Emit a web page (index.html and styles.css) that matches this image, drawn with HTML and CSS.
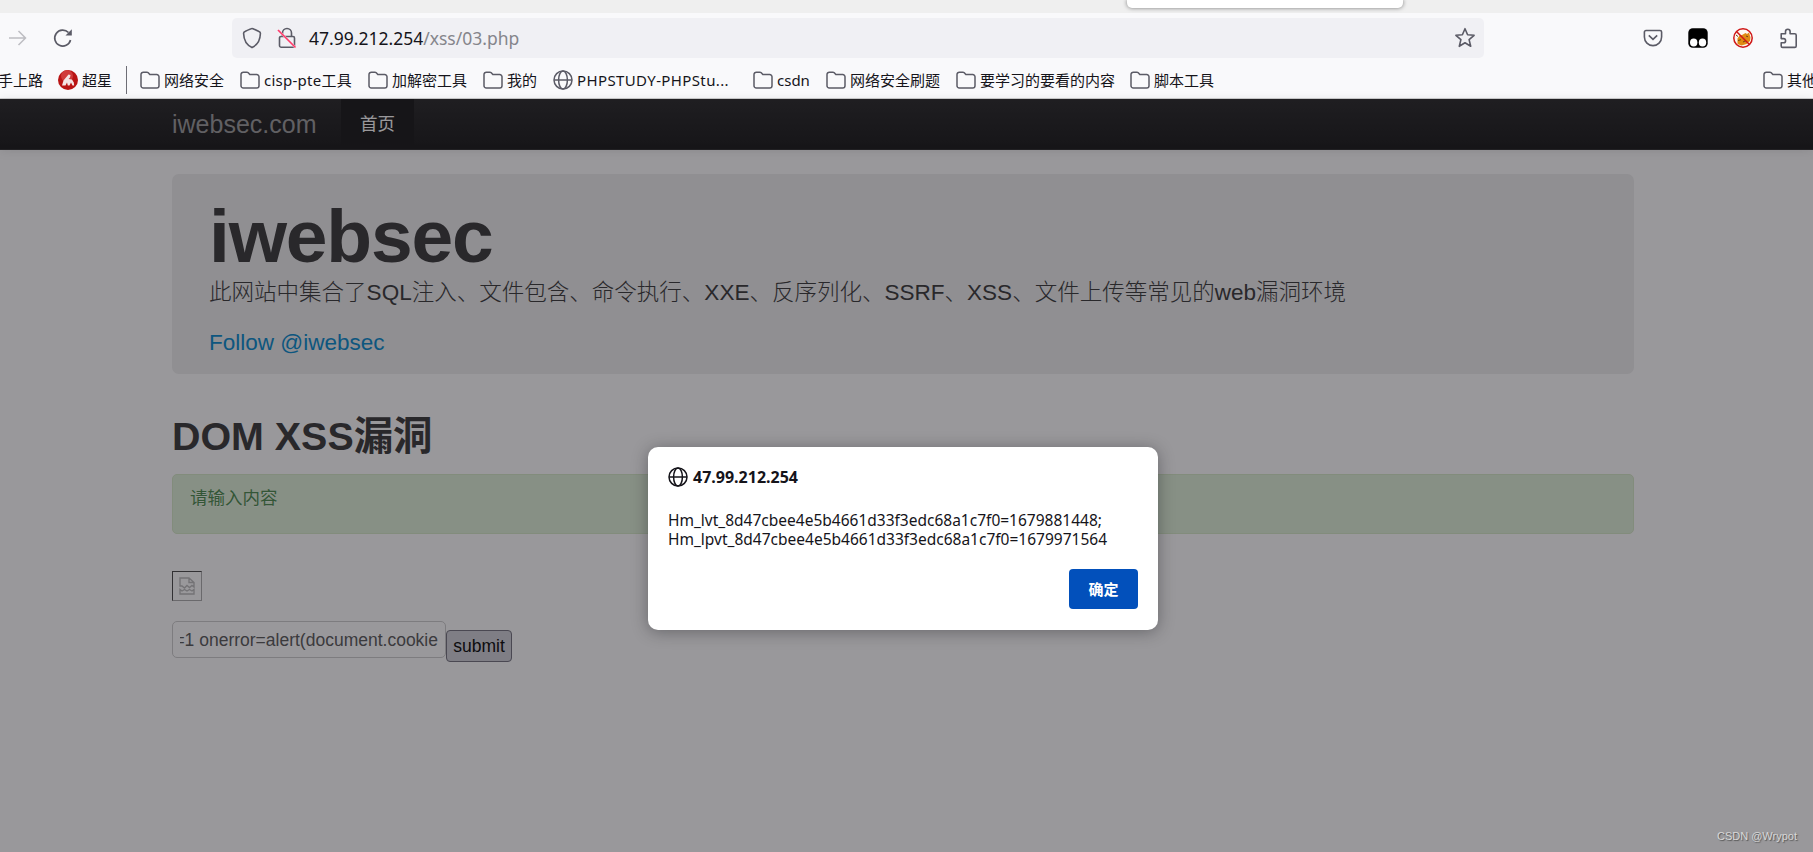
FILE: index.html
```html
<!DOCTYPE html>
<html lang="zh-CN">
<head>
    <meta charset="UTF-8">
    <title>DOM XSS漏洞</title>
    <link rel="stylesheet" href="styles.css">
</head>
<body>
    <!-- shared icons -->
    <svg class="defs" width="0" height="0">
        <symbol id="folder" viewBox="0 0 20 18">
            <path d="M1 3.5a2.3 2.3 0 0 1 2.3-2.3h3.6q.8 0 1.4.6l1.5 1.7h6.9A2.3 2.3 0 0 1 19 5.800v8.900A2.300 2.300 0 0 1 16.700 17H3.300A2.300 2.300 0 0 1 1 14.700z" fill="none" stroke="currentColor" stroke-width="1.5"/>
        </symbol>
        <symbol id="globe" viewBox="0 0 20 20">
            <g fill="none" stroke="currentColor" stroke-width="1.5">
                <circle cx="10" cy="10" r="9"/>
                <ellipse cx="10" cy="10" rx="4.4" ry="9"/>
                <path d="M1 10h18"/>
            </g>
        </symbol>
    </svg>

    <div class="tabstrip"><div class="tab-popup"></div></div>

    <div class="toolbar">
        <div class="nav-buttons">
            <svg class="forward" width="20" height="20" viewBox="0 0 20 20"><path d="M1 10h16.500M10.500 3l7 7-7 7" fill="none" stroke="currentColor" stroke-width="1.5"/></svg>
            <svg width="20" height="20" viewBox="0 0 20 20"><path d="M17.500 12A8 8 0 1 1 15.500 4.500" fill="none" stroke="currentColor" stroke-width="1.700"/><path d="M18.800 1.200v6.300h-6.300z" fill="currentColor"/></svg>
        </div>
        <div class="urlbar">
            <svg width="20" height="22" viewBox="0 0 20 22"><path d="M10 1.500Q10.700 1.500 17 4.400Q18.500 5 18.400 6.500C18.200 13 15.500 18 10 20.500C4.500 18 1.800 13 1.600 6.500Q1.500 5 3 4.400Q9.300 1.500 10 1.500z" fill="none" stroke="currentColor" stroke-width="1.6"/></svg>
            <svg class="lock" width="20" height="22" viewBox="0 0 20 22"><path d="M5.500 9.500V6a4.500 4.500 0 0 1 9 0v3.500M4 9.500h12a1.500 1.500 0 0 1 1.500 1.500v7.500a1.800 1.800 0 0 1-1.800 1.800H4.300a1.800 1.800 0 0 1-1.800-1.800V11A1.500 1.500 0 0 1 4 9.500z" fill="none" stroke="currentColor" stroke-width="1.6"/><path d="M2 4l17 17" stroke="#f0f0f4" stroke-width="2"/><path d="M1 3l17.500 17.500" stroke="#ff3b6b" stroke-width="1.700"/></svg>
            <span class="url"><span class="host">47.99.212.254</span>/xss/03.php</span>
            <svg class="star" width="22" height="22" viewBox="0 0 22 22"><path d="M11 1.700l2.600 6.100 6.500.5-5 4.300 1.600 6.700-5.700-3.500-5.700 3.500 1.600-6.700-5-4.300 6.500-.5z" fill="none" stroke="currentColor" stroke-width="1.600" stroke-linejoin="round"/></svg>
        </div>
        <div class="extensions">
            <svg width="20" height="20" viewBox="0 0 20 20"><path d="M3 2.500h14a1.600 1.600 0 0 1 1.600 1.600V9a8.600 8.600 0 0 1-17.200 0V4.100A1.600 1.600 0 0 1 3 2.500zM5.800 7.300L10 11.300l4.200-4" fill="none" stroke="currentColor" stroke-width="1.600"/></svg>
            <svg width="20" height="20" viewBox="0 0 20 20"><rect x=".3" y=".3" width="19.400" height="19.400" rx="4.500"/><ellipse cx="5.700" cy="14.600" rx="3.700" ry="4" fill="#fff"/><ellipse cx="14.500" cy="14.600" rx="3.700" ry="4" fill="#fff"/></svg>
            <svg width="20" height="20" viewBox="0 0 20 20"><circle cx="10" cy="10" r="9.200" fill="#fdf8f0"/><path d="M4.500 10.500L6.500 7.500 9 7l3.500-2 1.500 1L16 4.500l1.500 5-.5 3.500-3.500 3-5 1.500-4-1.500z" fill="#e08a12"/><path d="M5 12.500l3-.8M10 14l3-1.500M13 8l2 .8M3 7l2 1.500" stroke="#704414" stroke-width="1"/><circle cx="10" cy="10" r="9.200" fill="none" stroke="#cf1717" stroke-width="1.500"/><path d="M3.500 3.500l13 13" stroke="#cf1717" stroke-width="1.500"/></svg>
            <svg class="puzzle" width="20" height="22" viewBox="0 0 20 22"><path d="M2.200 6.800h4.300V4.500a2.300 2.300 0 0 1 4.600 0v2.300h4.700a1.400 1.400 0 0 1 1.400 1.400V19a1.400 1.400 0 0 1-1.400 1.400H3.600A1.400 1.400 0 0 1 2.200 19v-3.200h2.300a2.100 2.100 0 0 0 0-4.200H2.200z" fill="none" stroke="currentColor" stroke-width="1.600" stroke-linejoin="round"/></svg>
        </div>
    </div>

    <div class="bookmarks">
        <span class="bookmark cut">手上路</span>
        <span class="bookmark"><svg width="20" height="20" viewBox="0 0 20 20"><circle cx="10" cy="10" r="10" fill="#b91414"/><circle cx="9" cy="6" r="6" fill="#d03a3a"/><path d="M4 15.500l1.500-5 2.500-3 2.500-3 2 .5-.5 2.500-1.500 1.500 3.500.5 1.800 3 .4 3h-1.700l-1.500-3-1.500 3H9.800l-.8-3-1.500 3z" fill="#f4e4e4"/></svg>超星</span>
        <span class="separator"></span>
        <span class="bookmark"><svg><use href="#folder"/></svg>网络安全</span>
        <span class="bookmark cisp"><svg><use href="#folder"/></svg>cisp-pte工具</span>
        <span class="bookmark"><svg><use href="#folder"/></svg>加解密工具</span>
        <span class="bookmark"><svg><use href="#folder"/></svg>我的</span>
        <span class="bookmark site"><svg><use href="#globe"/></svg>PHPSTUDY-PHPStu...</span>
        <span class="bookmark"><svg><use href="#folder"/></svg>csdn</span>
        <span class="bookmark"><svg><use href="#folder"/></svg>网络安全刷题</span>
        <span class="bookmark"><svg><use href="#folder"/></svg>要学习的要看的内容</span>
        <span class="bookmark"><svg><use href="#folder"/></svg>脚本工具</span>
        <span class="bookmark"><svg><use href="#folder"/></svg>其他</span>
    </div>

    <div class="page">
        <div class="navbar">
            <a class="brand">iwebsec.com</a>
            <a class="active">首页</a>
        </div>
        <div class="container">
            <div class="hero-unit">
                <h1>iwebsec</h1>
                <p>此网站中集合了SQL注入、文件包含、命令执行、XXE、反序列化、SSRF、XSS、文件上传等常见的web漏洞环境</p>
                <p class="follow"><a>Follow @iwebsec</a></p>
            </div>
            <h2>DOM XSS漏洞</h2>
            <div class="alert">请输入内容</div>
            <div class="broken-img">
                <svg width="16" height="18" viewBox="0 0 16 18"><path d="M1 9V1h9l5 4.500V10l-2-1.500-2.500 2L8 8.500l-2.500 2.500L3 9zM10 1v4.500h5M1 17v-4.500l2 1.500 2.500-1.500L8 14l2.500-1.500L13 14l2-1.500V17z" fill="none" stroke="currentColor" stroke-width="1.400"/></svg>
            </div>
            <form class="search">
                <div class="text-input"><span>=1 onerror=alert(document.cookie</span></div>
                <button type="button" class="submit">submit</button>
            </form>
        </div>

        <div class="overlay">
            <div class="dialog">
                <div class="dialog-title"><svg><use href="#globe"/></svg>47.99.212.254</div>
                <div class="dialog-text">Hm_lvt_8d47cbee4e5b4661d33f3edc68a1c7f0=1679881448;<br>Hm_lpvt_8d47cbee4e5b4661d33f3edc68a1c7f0=1679971564</div>
                <button type="button" class="ok">确定</button>
            </div>
            <div class="watermark">CSDN @Wrypot</div>
        </div>
    </div>
</body>
</html>
```
FILE: styles.css
```css
*{
    box-sizing: border-box;
}
body{
    margin: 0;
    width: 1813px;
    height: 852px;
    overflow: hidden;
    display: flex;
    flex-direction: column;
    background: #f9f9fb;
    color: #15141a;
    font-family: "Noto Sans", "Noto Sans CJK SC", sans-serif;
}
svg{
    flex: none;
    display: block;
}
.defs{
    position: absolute;
}

/* browser chrome */
.tabstrip{
    height: 13px;
    flex: none;
    background: #efefef;
    padding-left: 1127px;
}
.tab-popup{
    width: 276px;
    height: 8px;
    background: #fff;
    border-radius: 0 0 5px 5px;
    box-shadow: 0 0 4px rgba(0,0,0,.5);
}
.toolbar{
    height: 50px;
    flex: none;
    display: flex;
    align-items: flex-start;
    padding-top: 5px;
    color: #5b5b66;
}
.nav-buttons{
    width: 232px;
    height: 40px;
    display: flex;
    align-items: center;
    gap: 25px;
    padding-left: 8px;
}
.forward{
    color: #bdbdc2;
}
.urlbar{
    width: 1252px;
    height: 40px;
    display: flex;
    align-items: center;
    padding: 0 8px 0 10px;
    background: #f0f0f4;
    border-radius: 5px;
}
.lock{
    margin-left: 15px;
}
.url{
    margin-left: 12px;
    font-size: 17.5px;
    color: #85858b;
    white-space: nowrap;
}
.host{
    color: #15141a;
}
.star{
    margin-left: auto;
}
.extensions{
    display: flex;
    align-items: center;
    height: 40px;
    gap: 25px;
    padding-left: 159px;
}
.puzzle{
    margin-left: 1px;
}
.bookmarks{
    height: 36px;
    flex: none;
    display: grid;
    grid-template-columns: 58px 68px 14px 100px 128px 115px 70px 200px 73px 130px 174px 633px 120px;
    align-items: center;
    border-bottom: 1px solid #ccccce;
    font-size: 15px;
    padding-bottom: 2px;
}
.bookmark{
    display: flex;
    align-items: center;
    gap: 4px;
    height: 28px;
    white-space: nowrap;
}
.bookmark svg{
    width: 20px;
    height: 20px;
    color: #5b5b66;
}
.cut{
    margin-left: -2px;
}
.cisp{
    letter-spacing: .25px;
}
.site{
    letter-spacing: .38px;
}
.separator{
    width: 1px;
    height: 28px;
    background: #6e6e76;
}

/* page behind the alert */
.page{
    flex: 1;
    position: relative;
    background: #fff;
    color: #333;
    font-family: "Liberation Sans", "Noto Sans CJK SC", sans-serif;
    font-size: 17.5px;
    line-height: 25px;
}
.navbar{
    height: 51px;
    display: flex;
    padding-left: 172px;
    background: linear-gradient(#222, #111);
    border-bottom: 1px solid #252525;
    line-height: 50px;
    box-shadow: 0 1px 10px rgba(0,0,0,.1);
}
.brand{
    width: 169px;
    font-size: 25px;
    color: #999;
}
.active{
    width: 73px;
    text-align: center;
    background: #111;
    color: #fff;
}
.container{
    width: 1462px;
    margin: 24px 0 0 172px;
}
.hero-unit{
    height: 200px;
    padding: 25px 37px 23px;
    background: #eee;
    border-radius: 7px;
    font-size: 22.53px;
    line-height: 37.5px;
    font-weight: 200;
    white-space: nowrap;
}
.hero-unit h1{
    margin: 0;
    font-size: 75px;
    line-height: 75px;
    letter-spacing: -1.2px;
    font-weight: bold;
}
.hero-unit p{
    margin: 0 0 12px;
}
.follow a{
    color: #08c;
}
.container h2{
    margin: 37px 0 12px;
    font-size: 39.4px;
    line-height: 51px;
}
.alert{
    height: 60px;
    padding: 11px 17px;
    background: #dff0d8;
    border: 1px solid #d6e9c6;
    border-radius: 5px;
    color: #468847;
    text-shadow: 0 1px 0 rgba(255,255,255,.5);
}
.broken-img{
    width: 30px;
    height: 30px;
    margin-top: 37px;
    display: flex;
    align-items: center;
    justify-content: center;
    border: 1px solid #aaa;
    border-top-color: #444;
    border-left-color: #444;
    color: #bbb;
}
.search{
    display: flex;
    margin: 20px 0 0;
}
.text-input{
    width: 274px;
    height: 37px;
    padding: 6px 7px;
    border: 1px solid #ccc;
    border-radius: 5px;
    color: #555;
}
.text-input span{
    display: flex;
    justify-content: flex-end;
    overflow: hidden;
    white-space: nowrap;
}
.submit{
    width: 66px;
    height: 32px;
    margin: 9px 0 0;
    padding: 0;
    border: 1px solid #6f6e7b;
    border-radius: 4px;
    background: #d0d0d7;
    font: 17.5px "Liberation Sans", sans-serif;
    color: #000;
}

/* alert box */
.overlay{
    position: absolute;
    inset: 0;
    background: rgba(28,27,34,.45);
    font-family: "Noto Sans", "Noto Sans CJK SC", sans-serif;
    color: #15141a;
}
.dialog{
    width: 510px;
    height: 183px;
    margin: 348px 0 0 648px;
    padding: 20px;
    display: flex;
    flex-direction: column;
    background: #fff;
    border-radius: 10px;
    box-shadow: 0 2px 16px rgba(30,30,34,.4);
    font-size: 15.5px;
    line-height: 19px;
}
.dialog-title{
    display: flex;
    align-items: center;
    gap: 5px;
    height: 20px;
    font-size: 16px;
    font-weight: bold;
}
.dialog-title svg{
    width: 20px;
    height: 20px;
}
.dialog-text{
    margin-top: 24px;
    white-space: nowrap;
}
.ok{
    width: 69px;
    height: 40px;
    margin: 20px 0 0 auto;
    padding: 0 0 2px;
    border: 0;
    border-radius: 4px;
    background: #0250bb;
    color: #fff;
    font: bold 15px "Noto Sans CJK SC", sans-serif;
}
.watermark{
    position: absolute;
    right: 16px;
    bottom: 6px;
    font: 11px/20px "Liberation Sans", sans-serif;
    color: #d8d8d8;
    text-shadow: 1px 1px 1px #555;
}
```
